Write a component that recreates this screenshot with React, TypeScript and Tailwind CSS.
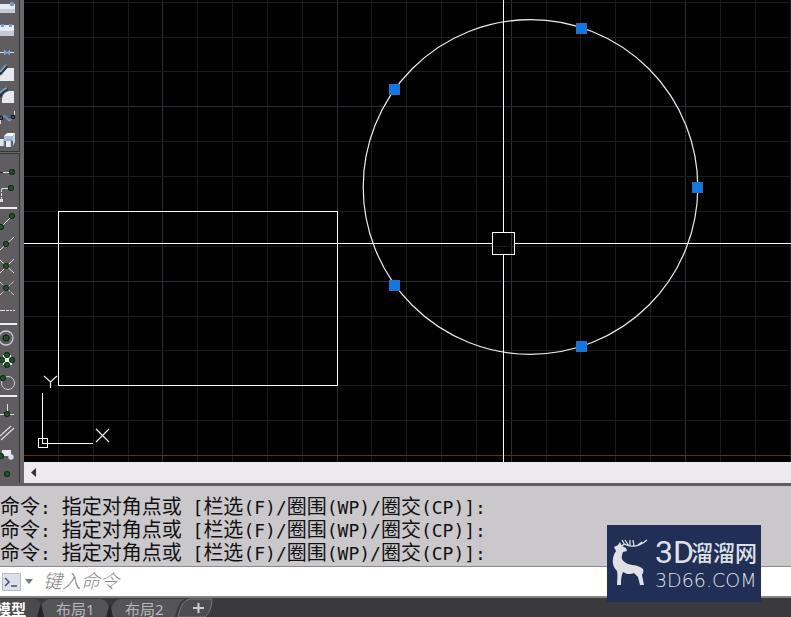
import React, { ReactNode } from 'react';

const COLUMNS = [34, 69, 104, 138, 173, 208, 243, 278, 313, 347, 382, 417, 452, 487, 522, 556, 591, 626, 661, 696, 731, 766];
const ROWS = [2, 37, 71, 106, 141, 176, 211, 246, 281, 316, 350, 385, 420];
const MAJOR_COLUMNS = [138, 313, 487, 661];
const MAJOR_ROWS = [106, 281];
const GRIPS = [[557, 28], [370, 89], [673, 187], [370, 285], [557, 346]];

const Node = ({ x, y }: { x: number; y: number }) => (
  <>
    <circle cx={x} cy={y} r="2.4" fill="#2c6b3a" stroke="#0b2b13" strokeWidth="1.3" />
    <circle cx={x} cy={y} r="0.8" fill="#12371b" />
  </>
);

type Tool = { label: string; icon: ReactNode };

const editTools: Tool[] = [
  { label: '打断于点', icon: <><path d="M0 7h15v9H0z" fill="#e6eaf1" /><path d="M0 12h15v4H0z" fill="#c3cad5" /><path d="M10 5h4v4h-4z" fill="#6d9cc4" /></> },
  { label: '打断', icon: <><path d="M0 6h14v11H0z" fill="#e6eaf1" /><path d="M0 12h14v5H0z" fill="#c3cad5" /><path d="M1 5h3v3H1zM9 5h3v3H9z" fill="#6d9cc4" /></> },
  { label: '合并', icon: <><path d="M0 11.500h14" stroke="#d6dbe2" /><path d="M4 9l3 2.500-3 2.500M10 9l-3 2.500 3 2.500" fill="#76a7d2" stroke="#76a7d2" /></> },
  { label: '倒角', icon: <><path d="M0 18v-5l7-8h7v13z" fill="#e6e9ef" /><path d="M0 11l7-8" stroke="#23394a" strokeWidth="3" /><path d="M0 9l6-7" stroke="#80a8bd" strokeWidth="1.5" /></> },
  { label: '圆角', icon: <><path d="M2 18v-4q1-7 7-8h5v12z" fill="#e6e9ef" /><path d="M0 12q2-7 8-8" stroke="#23394a" strokeWidth="3" /><path d="M0 8q3-4 7-5" stroke="#80a8bd" strokeWidth="1.5" /></> },
  { label: '光顺曲线', icon: <><path d="M2 11c5-7 5 8 10 0" stroke="#6b9bc9" strokeWidth="1.6" /><circle cx="1" cy="11" r="1.7" stroke="#151b25" strokeWidth="1.3" /><circle cx="13" cy="10" r="1.7" stroke="#151b25" strokeWidth="1.3" /><path d="M14.500 8V4M.5 13v4" stroke="#d8d8d8" /></> },
  { label: '分解', icon: <><path d="M4 7l3-3h8l-2 3z" fill="#f1f6fa" /><path d="M4 7h9v5H4z" fill="#a9bfd2" /><path d="M13 7l2-3v9l-2 4z" fill="#c7d6e4" /><path d="M0 10h4v7H0z" fill="#dbe6f0" /><path d="M6 12h5v6H6z" fill="#e6eef5" /><path d="M4 10v7M6 12l1-1h5l-1 1v6l1-1" stroke="#7390ad" strokeWidth=".7" /></> },
];

const snapTools: (Tool | null)[] = [
  { label: '临时追踪点', icon: <><path d="M0 11.500h11" stroke="#ddd" /><path d="M0 11.500h3" stroke="#222" /><Node x={12} y={11} /></> },
  { label: '捕捉自', icon: <><path d="M10 5.500H1.500" stroke="#ddd" /><path d="M1.500 6v10" stroke="#ddd" strokeDasharray="3 1" /><path d="M0 16h3v3H0z" fill="#ddd" /><Node x={11} y={5} /></> },
  null,
  { label: '捕捉到端点', icon: <><path d="M1 16L12 5" stroke="#ddd" /><Node x={1} y={16} /><Node x={12} y={5} /></> },
  { label: '捕捉到中点', icon: <><path d="M0 17L14 4" stroke="#ddd" /><Node x={6} y={11} /></> },
  { label: '捕捉到交点', icon: <><path d="M0 5l14 13M0 18L14 4" stroke="#ddd" /><Node x={6} y={11} /></> },
  { label: '捕捉到外观交点', icon: <><path d="M0 5l14 13M0 18L14 4" stroke="#ccc" strokeDasharray="4 1" /><Node x={6} y={11} /></> },
  { label: '捕捉到延长线', icon: <path d="M0 11.500h5m1 0h3m1 0h2m1 0h2" stroke="#ddd" /> },
  null,
  { label: '捕捉到圆心', icon: <><circle cx="6" cy="11" r="7" stroke="#ccc" strokeWidth="1.3" /><circle cx="6" cy="11" r="2.8" fill="#2c6b3a" stroke="#0b2b13" strokeWidth="1.5" /><circle cx="6" cy="11" r="1" fill="#0b2b13" /></> },
  { label: '捕捉到象限点', icon: <><path d="M3 6h8l1 10H3z" fill="#e3f1e6" /><Node x={7} y={6} /><Node x={7} y={16} /><Node x={2} y={11} /><Node x={12} y={11} /></> },
  { label: '捕捉到切点', icon: <><circle cx="8" cy="12" r="6.5" stroke="#ccc" /><Node x={3} y={7} /></> },
  null,
  { label: '捕捉到垂足', icon: <><path d="M7.500 5v9M0 15.500h14" stroke="#ddd" /><Node x={7} y={15} /></> },
  { label: '捕捉到平行线', icon: <path d="M0 15L11 5M1 19L14 7" stroke="#ddd" strokeWidth="1.2" /> },
  { label: '捕捉到插入点', icon: <><path d="M2 7h9v6H2z" fill="#e9edf0" /><circle cx="11" cy="14" r="2.700" fill="#dce0e5" /><Node x={1} y={13} /></> },
  { label: '捕捉到节点', icon: <Node x={7} y={9} /> },
];

const ToolButton = ({ label, icon }: Tool) => (
  <button type="button" aria-label={label} className="block h-[22px] w-full shrink-0">
    <svg width="19" height="22" viewBox="0 0 19 22" fill="none" aria-hidden="true">{icon}</svg>
  </button>
);

const Toolbar = () => (
  <aside className="flex w-6 shrink-0 flex-col overflow-hidden bg-[#69696b] pr-1">
    <div className="-mt-[3px] shrink-0 border-r border-b border-[#353537] bg-[#5f5d60]">
      {editTools.map((tool) => <ToolButton key={tool.label} {...tool} />)}
    </div>
    <div className="mt-px flex-1 border-t border-r border-[#353537] bg-[#5f5d60] pt-[7px]">
      {snapTools.map((tool, i) => tool
        ? <ToolButton key={tool.label} {...tool} />
        : <hr key={i} className="my-0.5 mr-0.5 h-0.5 border-0 bg-[#eeeeee]" />)}
    </div>
  </aside>
);

const Drawing = () => (
  <svg className="absolute inset-0 h-full w-full" fill="none" shapeRendering="crispEdges" role="img" aria-label="绘图区">
    {COLUMNS.map((x) => (
      <rect key={x} x={x} width="1" height="100%" fill={MAJOR_COLUMNS.includes(x) ? '#2d2c38' : '#1c191f'} />
    ))}
    {ROWS.map((y) => (
      <rect key={y} y={y} width="100%" height="1" fill={MAJOR_ROWS.includes(y) ? '#2d2c38' : '#1c191f'} />
    ))}
    <rect y="455" width="100%" height="1" fill="#63301f" />
    <rect x="34.5" y="211.5" width="279" height="174" stroke="#fff" />
    <circle cx="506.5" cy="187" r="167.3" stroke="#eee" strokeWidth="1.2" shapeRendering="auto" />
    {GRIPS.map(([x, y]) => (
      <rect key={`${x}-${y}`} x={x - 4.5} y={y - 4.5} width="10" height="10" fill="#087af1" stroke="#3d6ca5" />
    ))}
    <rect x="479" y="0" width="1" height="232" fill="#fff" />
    <rect x="479" y="255" width="1" height="100%" fill="#fff" />
    <rect x="0" y="243" width="468" height="1" fill="#fff" />
    <rect x="491" y="243" width="100%" height="1" fill="#fff" />
    <rect x="468.5" y="232.5" width="22" height="22" stroke="#fff" />
    <path d="M18.5 393v50h50M14.5 438.500h9v9h-9z" stroke="#fff" />
    <path d="M20 376l6.500 6 6.500-6M26.500 382v6M72 429l13 13M85 429l-13 13" stroke="#eee" strokeWidth="1.2" shapeRendering="auto" />
  </svg>
);

const Cjk = ({ children }: { children: ReactNode }) => <span className="text-xl leading-[23px]">{children}</span>;

const CommandLine = () => (
  <p className="h-[23px] leading-[23px]">
    <Cjk>命令</Cjk>: <Cjk>指定对角点或</Cjk> [<Cjk>栏选</Cjk>(F)/<Cjk>圈围</Cjk>(WP)/<Cjk>圈交</Cjk>(CP)]:
  </p>
);

const Watermark = () => (
  <div className="absolute right-[30px] bottom-[15px] flex h-[77px] w-[154px] items-center bg-[#212e55] text-[#dfe1e4]">
    <svg className="shrink-0" width="46" height="77" viewBox="0 0 46 77" fill="none" aria-hidden="true">
      <path d="M7 22l4-2 2-3 2 4 4 2 1 3-4 1c-2 5-2 8 3 11 5 3 12 1 17 6 1 2 0 4-1 6l2 10h-4l-2-8-4-4c-4 2-8 1-11-1-2 4-2 8-2 13h-4c0-5 1-9 0-14-6-6-5-14-1-20z" fill="currentColor" />
      <path d="M14 22l3-3c8 4 15 3 23-4M18 20l-3-5M22 21l-4-6M23 21v-6M27 21l-1-6M31 20l4-3" stroke="currentColor" strokeWidth="1.3" />
    </svg>
    <div className="ml-0.5 flex flex-col gap-1 whitespace-nowrap">
      <div className="flex h-7 items-center text-[22px] leading-7">
        <span className="w-9 font-['Liberation_Sans_Narrow','Roboto',sans-serif] text-[32px]">3D</span>
        <span className="font-medium">溜溜网</span>
      </div>
      <div className="font-['DejaVu_Sans',sans-serif] text-[19px] leading-5 font-extralight">3D66.COM</div>
    </div>
  </div>
);

const App = () => (
  <div className="flex h-screen flex-col overflow-hidden bg-[#3a393b] font-['Noto_Sans','Noto_Sans_CJK_SC',sans-serif]">
    <div className="flex min-h-0 flex-1 border-b-[3px] border-[#5f5e61]">
      <Toolbar />
      <main className="flex min-w-0 flex-1 flex-col">
        <div className="relative flex-1 overflow-hidden bg-black"><Drawing /></div>
        <div className="flex h-[21px] items-center bg-[#edebee] pl-1">
          <button type="button" aria-label="向左滚动" className="px-0.5">
            <svg width="7" height="10" aria-hidden="true"><path d="M6 0v9L1 4.500z" fill="#333" /></svg>
          </button>
        </div>
      </main>
    </div>
    <div className="relative">
      <section className="h-[81px] overflow-hidden border-b border-[#8b898b] bg-[#cac8cb] pt-2.5 font-['DejaVu_Sans_Mono','Noto_Sans_CJK_SC',monospace] text-lg whitespace-pre text-[#111]">
        <CommandLine />
        <CommandLine />
        <CommandLine />
      </section>
      <div className="flex h-[31px] items-center border-b-2 border-[#858487] bg-white">
        <button type="button" aria-label="最近使用的命令" className="flex items-center gap-1 pl-0.5">
          <svg width="19" height="18" fill="none" aria-hidden="true">
            <rect x=".5" y=".5" width="18" height="17" fill="#dbe0ea" stroke="#b6bcc8" />
            <path d="M3 5l4 4-4 4M9 13h6" stroke="#475063" strokeWidth="1.5" />
          </svg>
          <svg width="8" height="5" aria-hidden="true"><path d="M0 0h8L4 5z" fill="#777" /></svg>
        </button>
        <input
          aria-label="键入命令"
          placeholder="键入命令"
          className="ml-2.5 min-w-0 flex-1 text-[19px] font-light italic outline-none placeholder:text-[#858585]"
        />
      </div>
      <nav className="relative flex h-[19px] items-start overflow-hidden text-[15px] leading-[22px] text-[#b9b8ba]">
        <svg className="absolute inset-0" width="240" height="19" fill="none" aria-hidden="true">
          <path d="M0 1h34q6 0 9 8l5 10H0z" fill="#4a494c" />
          <path d="M38 19q3-18 12-18h50q6 0 9 8l4 10zM109 19q3-18 12-18h64q-7 2-10 18z" fill="#555457" />
          <path d="M37 19l4-14 3 14zM106 19l4-14 3 14z" fill="#252426" />
          <path d="M178 19q3-17 12-18h22q0 12-7 18z" fill="#4d4c4f" stroke="#767578" />
        </svg>
        <button type="button" className="relative -ml-1 w-[60px] pr-7 text-left font-bold whitespace-nowrap text-white underline underline-offset-1">模型</button>
        <button type="button" className="relative w-[69px] text-left whitespace-nowrap">布局1</button>
        <button type="button" className="relative w-[60px] text-left whitespace-nowrap">布局2</button>
        <button type="button" aria-label="新建布局" className="relative mt-1 ml-2">
          <svg width="11" height="12" aria-hidden="true"><path d="M5.500 1v10M0 6h11" stroke="#ccc" strokeWidth="2" /></svg>
        </button>
      </nav>
      <Watermark />
    </div>
  </div>
);

export default App;
